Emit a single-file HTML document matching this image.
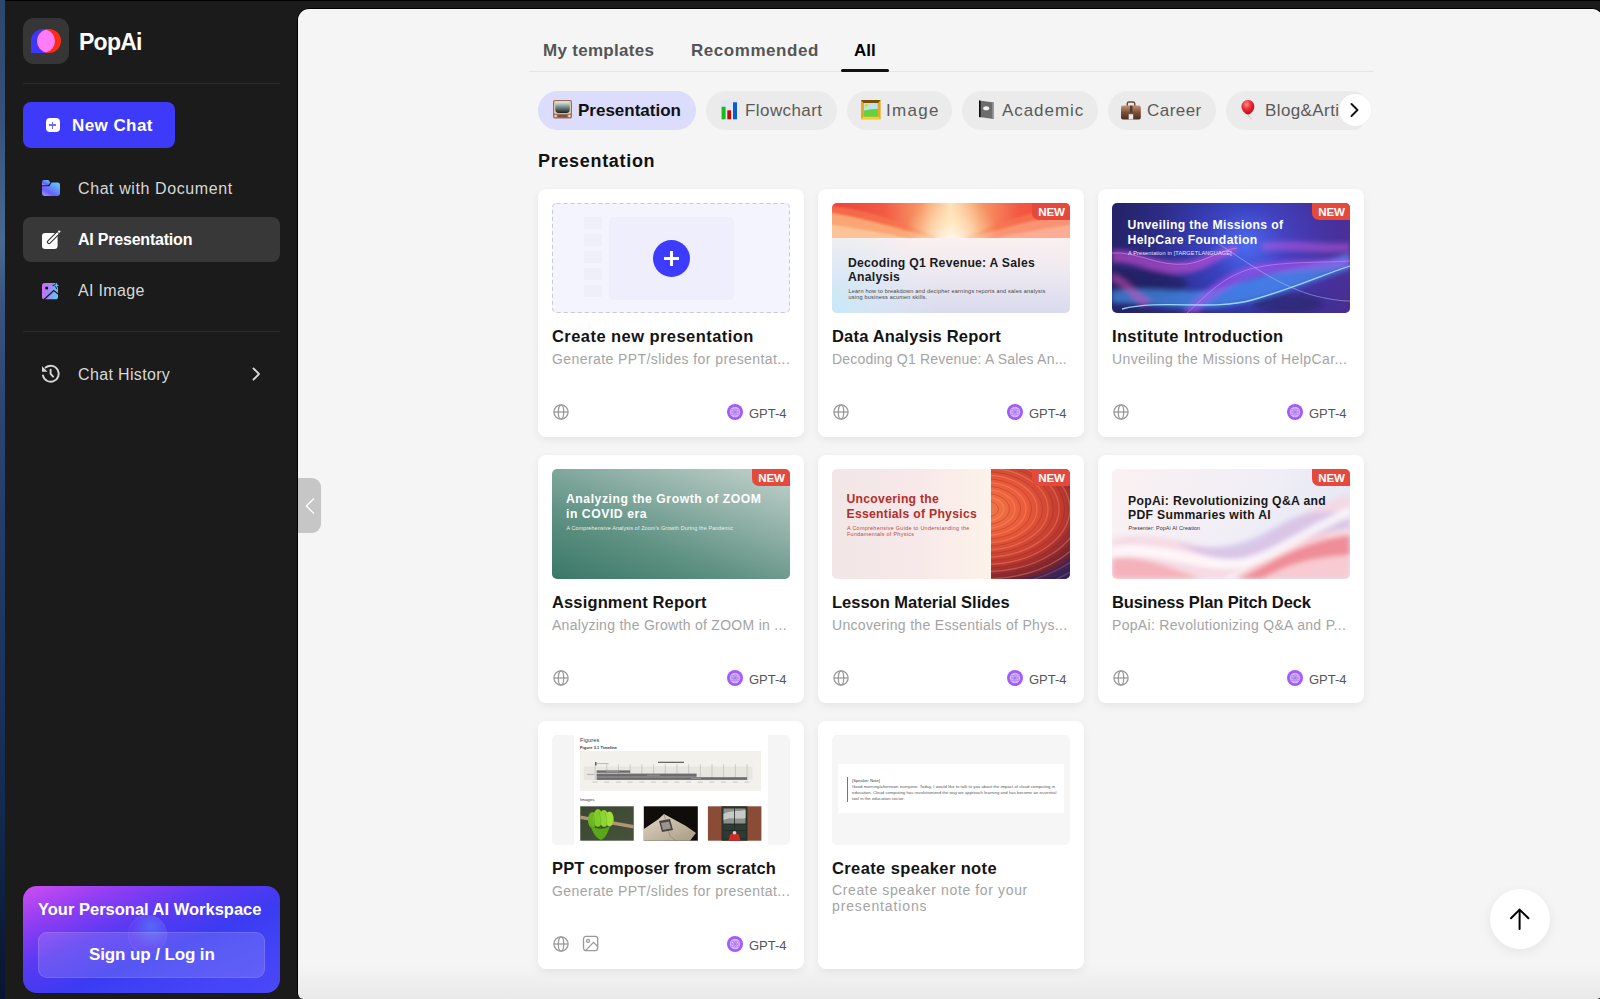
<!DOCTYPE html>
<html><head><meta charset="utf-8">
<style>
*{margin:0;padding:0;box-sizing:border-box}
html,body{width:1600px;height:999px;overflow:hidden}
body{background:#1b1b1b;font-family:"Liberation Sans",sans-serif;position:relative}
.abs{position:absolute}
.t{position:absolute;white-space:nowrap;line-height:1}
#strip{left:0;top:0;width:5px;height:999px;background:linear-gradient(#2c466c 0%,#36527a 12%,#4a6990 24%,#3a5680 30%,#2c4872 40%,#213c66 55%,#1a325c 70%,#122a4e 82%,#0c1e3c 92%,#081530 100%)}
#topline{left:5px;top:0;width:1595px;height:1px;background:#000}
#panel{left:297px;top:8px;width:1306px;height:991px;background:#f5f5f5;border:1px solid #000;border-bottom:0;border-radius:12px 10px 6px 6px;overflow:hidden}
.side-t{color:#d8d8d8;font-size:16px;letter-spacing:0.45px}
.card{position:absolute;width:266px;height:248px;background:#fff;border-radius:8px;box-shadow:0 3px 9px rgba(0,0,0,.065)}
.thumb{position:absolute;left:14px;top:14px;width:238px;height:110px;border-radius:5px;overflow:hidden}
.ctitle{position:absolute;left:14px;top:139px;font-size:16.5px;letter-spacing:0.46px;font-weight:bold;color:#141414;white-space:nowrap;line-height:1}
.csub{position:absolute;left:14px;top:163px;font-size:14px;letter-spacing:0.39px;color:#a4a4a4;white-space:nowrap;line-height:1}
.gl{position:absolute;left:13.7px;top:213.5px}
.gpt{position:absolute;left:188.3px;top:213.5px}
.gptt{position:absolute;left:211px;top:218px;font-size:13px;color:#555;line-height:1;white-space:nowrap}
.tt{position:absolute;white-space:nowrap;font-weight:bold}
.new{position:absolute;right:0;top:0;width:38px;height:17px;background:#e5493b;color:#fff;font-size:11.6px;font-weight:bold;border-bottom-left-radius:7px;text-align:center;line-height:18px;letter-spacing:-0.25px;padding-left:1px}
.chip{position:absolute;top:90.5px;height:39px;border-radius:19.5px;background:#ebebeb}
.chipt{position:absolute;top:102px;font-size:17px;color:#5a5a5a;line-height:1;white-space:nowrap}
</style></head>
<body>
<div id="topline" class="abs"></div>
<div id="strip" class="abs"></div>

<!-- sidebar -->
<div class="abs" style="left:23px;top:18px;width:46px;height:46px;border-radius:11px;background:#363636"></div>
<svg class="abs" style="left:31px;top:29px" width="30" height="24" viewBox="0 0 30 24">
  <path d="M0 24 V12 A12 12 0 0 1 24 12 A12 12 0 0 1 12 24 Z" fill="#3b37fb"/>
  <circle cx="18" cy="12" r="12" fill="#ff2b14"/>
  <path d="M15 0.38 A12 12 0 0 1 15 23.62 A12 12 0 0 1 15 0.38 Z" fill="#ff7cfb"/>
</svg>
<div class="t" style="left:79px;top:31px;font-size:23px;font-weight:bold;color:#fff;letter-spacing:-0.75px">PopAi</div>
<div class="abs" style="left:23px;top:83px;width:257px;height:1px;background:#2c2c2c"></div>

<div class="abs" style="left:23px;top:102px;width:152px;height:46px;border-radius:8px;background:#3e3afa"></div>
<div class="abs" style="left:46px;top:118px;width:14px;height:14px;border-radius:4px;background:#fff"></div>
<div class="abs" style="left:49px;top:124.3px;width:7px;height:1.4px;background:#6e6bfc"></div>
<div class="abs" style="left:51.8px;top:121.5px;width:1.4px;height:7px;background:#6e6bfc"></div>
<div class="t" style="left:72px;top:117px;font-size:17px;font-weight:bold;color:#fff;letter-spacing:0.43px">New Chat</div>

<!-- chat with document -->
<svg class="abs" style="left:42px;top:180px" width="18" height="16" viewBox="0 0 18 16">
  <defs><linearGradient id="fg" x1="1" y1="0" x2="0.2" y2="1"><stop offset="0" stop-color="#5ad8f7"/><stop offset="0.75" stop-color="#6b5dff"/><stop offset="1" stop-color="#9a8cff"/></linearGradient></defs>
  <path d="M2 0 H5.8 Q6.6 0 7.1 0.7 L8.3 2.5 L6.7 4.8 Q6.4 5.2 5.8 5.2 H0 V2 A2 2 0 0 1 2 0 Z" fill="url(#fg)"/>
  <path d="M0 6.3 H6.6 Q7.2 6.3 7.6 5.7 L9.4 2.8 Q9.7 2.4 10.2 2.4 H15.6 A2.4 2.4 0 0 1 18 4.8 V13.6 A2.4 2.4 0 0 1 15.6 16 H2.4 A2.4 2.4 0 0 1 0 13.6 Z" fill="url(#fg)"/>
</svg>
<div class="t side-t" style="left:78px;top:181px;letter-spacing:0.59px">Chat with Document</div>

<div class="abs" style="left:23px;top:217px;width:257px;height:45px;border-radius:8px;background:#383838"></div>
<svg class="abs" style="left:41px;top:230px" width="20" height="20" viewBox="0 0 20 20">
  <rect x="1" y="3" width="15.6" height="16" rx="3.2" fill="#fff"/>
  <path d="M8 12 L17.5 2.5" stroke="#383838" stroke-width="4.2" stroke-linecap="round"/>
  <path d="M8 12 L16.5 3.5" stroke="#fff" stroke-width="1.9" stroke-linecap="round"/>
  <circle cx="18.2" cy="1.6" r="1.2" fill="#fff"/>
</svg>
<div class="t" style="left:78px;top:232px;font-size:16px;font-weight:bold;color:#fff;letter-spacing:-0.21px">AI Presentation</div>

<svg class="abs" style="left:42px;top:280px" width="19" height="20" viewBox="0 0 19 20">
  <defs><linearGradient id="ig" x1="0" y1="0.3" x2="1" y2="0.6"><stop offset="0" stop-color="#cf6cf6"/><stop offset="0.5" stop-color="#9b8cf8"/><stop offset="1" stop-color="#5ccaf6"/></linearGradient></defs>
  <rect x="0" y="3" width="16" height="16.3" rx="2.6" fill="url(#ig)"/>
  <circle cx="4.7" cy="7.9" r="1.5" fill="#000"/>
  <path d="M1.8 19.8 L11.7 10.6 L16.8 14.4" stroke="#1b1b1b" stroke-width="1.3" fill="none"/>
  <path d="M14.4 0.6 L15.6 3.9 L18.9 5.2 L15.6 6.5 L14.4 9.8 L13.2 6.5 L9.9 5.2 L13.2 3.9Z" fill="#1b1b1b"/>
  <path d="M14.4 2.4 L15.2 4.4 L17.2 5.2 L15.2 6 L14.4 8 L13.6 6 L11.6 5.2 L13.6 4.4Z" fill="#5bc8f8"/>
</svg>
<div class="t side-t" style="left:78px;top:283px;letter-spacing:0.34px">AI Image</div>

<div class="abs" style="left:23px;top:331px;width:257px;height:1px;background:#2c2c2c"></div>

<svg class="abs" style="left:36px;top:358px" width="30" height="30" viewBox="0 0 30 30">
  <path d="M6.9 17.4 A8 8 0 1 0 9.6 9.6" stroke="#d8d8d8" stroke-width="1.9" fill="none" stroke-linecap="round"/>
  <path d="M6 8.2 V13.8 H11.6 Z" fill="#d8d8d8"/>
  <path d="M14.6 11.6 V15.9 L17.1 18.6" stroke="#d8d8d8" stroke-width="1.9" fill="none" stroke-linecap="round" stroke-linejoin="round"/>
</svg>
<div class="t side-t" style="left:78px;top:367px;letter-spacing:0.35px">Chat History</div>
<svg class="abs" style="left:251px;top:367px" width="10" height="14" viewBox="0 0 10 14">
  <path d="M2.5 1.5 L8 7 L2.5 12.5" stroke="#d8d8d8" stroke-width="1.8" fill="none" stroke-linecap="round" stroke-linejoin="round"/>
</svg>

<!-- workspace card -->
<div class="abs" style="left:23px;top:886px;width:257px;height:107px;border-radius:14px;overflow:hidden;background:linear-gradient(158deg,#cf4ef2 0%,#8e3df2 20%,#5a3af2 38%,#3b3bf2 58%,#4444f6 80%,#4a48f8 100%)">
  <div class="abs" style="left:105px;top:29px;width:39px;height:39px;border-radius:50%;background:radial-gradient(circle at 60% 30%,rgba(90,140,255,.55),rgba(110,60,240,.35) 60%,rgba(80,60,230,.15));box-shadow:inset 0 0 2px rgba(150,160,255,.35)"></div>
</div>
<div class="t" style="left:38px;top:901px;font-size:16.5px;font-weight:bold;color:#fff">Your Personal AI Workspace</div>
<div class="abs" style="left:38px;top:932px;width:227px;height:46px;border-radius:9px;background:rgba(255,255,255,.14);border:1px solid rgba(255,255,255,.12)"></div>
<div class="t" style="left:89px;top:946px;font-size:17px;font-weight:bold;color:#fff;letter-spacing:-0.11px">Sign up / Log in</div>

<!-- main panel -->
<div id="panel" class="abs">
<div class="abs" style="left:0;top:955px;width:1303px;height:36px;background:linear-gradient(rgba(0,0,0,0),rgba(0,0,0,.05))"></div>
</div>

<!-- tabs -->
<div class="t" style="left:543px;top:42px;font-size:17px;font-weight:bold;color:#555;letter-spacing:0.3px">My templates</div>
<div class="t" style="left:691px;top:42px;font-size:17px;font-weight:bold;color:#555;letter-spacing:0.54px">Recommended</div>
<div class="t" style="left:854px;top:42px;font-size:17px;font-weight:bold;color:#000">All</div>
<div class="abs" style="left:529px;top:71px;width:845px;height:1px;background:#e6e6e6"></div>
<div class="abs" style="left:841px;top:69px;width:48px;height:3px;border-radius:2px;background:#111"></div>

<!-- chips -->
<div class="chip" style="left:538px;width:158px;background:#dcdcfd"></div>
<div class="chipt" style="left:578px;color:#111;font-weight:bold">Presentation</div>
<div class="chip" style="left:706px;width:131px"></div>
<div class="chipt" style="left:745px;letter-spacing:0.42px">Flowchart</div>
<div class="chip" style="left:847px;width:105px"></div>
<div class="chipt" style="left:886px;letter-spacing:1.3px">Image</div>
<div class="chip" style="left:962px;width:136px"></div>
<div class="chipt" style="left:1002px;letter-spacing:0.94px">Academic</div>
<div class="chip" style="left:1108px;width:108px"></div>
<div class="chipt" style="left:1147px;letter-spacing:0.46px">Career</div>
<div class="chip" style="left:1226px;width:137px;border-radius:20px 9px 9px 20px"></div>
<div class="chipt" style="left:1265px;letter-spacing:0.4px;width:80px;overflow:hidden">Blog&amp;Arti</div>
<div class="abs" style="left:1339px;top:94px;width:32px;height:32px;border-radius:50%;background:#fff;box-shadow:0 0 2px rgba(0,0,0,.04)"></div>
<svg class="abs" style="left:1348px;top:102px" width="14" height="16" viewBox="0 0 14 16"><path d="M3.5 2 L9.5 8 L3.5 14" stroke="#111" stroke-width="1.9" fill="none" stroke-linecap="round" stroke-linejoin="round"/></svg>
<!-- emojis -->
<svg class="abs" style="left:553px;top:100px" width="19" height="19" viewBox="0 0 19 19">
  <defs><linearGradient id="tvs" x1="0" y1="0" x2="0" y2="1"><stop offset="0" stop-color="#d8efec"/><stop offset="0.45" stop-color="#7e8f8e"/><stop offset="1" stop-color="#1a1f1f"/></linearGradient></defs>
  <rect x="0" y="0" width="19" height="18.5" rx="1.8" fill="#a46a52"/>
  <rect x="1.1" y="1.1" width="16.8" height="12.6" rx="1" fill="#ddd0b0"/>
  <rect x="2.3" y="1.8" width="14.4" height="11.2" rx="3.5" fill="url(#tvs)"/>
  <rect x="5" y="15" width="9" height="2.3" fill="#6d5a4a"/>
  <circle cx="2.6" cy="16" r="1.3" fill="#e3dcc0"/><circle cx="16.4" cy="16" r="1.3" fill="#e3dcc0"/>
</svg>
<svg class="abs" style="left:721px;top:100px" width="17" height="20" viewBox="0 0 17 20">
  <rect x="0" y="0" width="16.5" height="19.5" fill="#e1e8f1"/>
  <rect x="0.6" y="6.8" width="4" height="12.5" fill="#19b81d"/>
  <rect x="6.3" y="10.3" width="3.8" height="9" fill="#c40a0a"/>
  <rect x="12" y="2.3" width="4" height="17" fill="#0a5cd0"/>
</svg>
<svg class="abs" style="left:861px;top:100px" width="20" height="20" viewBox="0 0 20 20">
  <rect x="0" y="0" width="19.6" height="19.3" fill="#e2ac1c"/>
  <path d="M0 0 H19.6 L17 3 H2.6 Z" fill="#7a4d08"/>
  <path d="M0 19.3 H19.6 L17 16.6 H2.6 Z" fill="#f4d130"/>
  <rect x="3" y="3" width="13.7" height="13.6" fill="#66d040"/>
  <path d="M3 3 H16.7 V9 Q10 8.5 3 10.5 Z" fill="#b9e3f0"/>
  <circle cx="5.5" cy="5.3" r="1.7" fill="#f0d600"/>
</svg>
<svg class="abs" style="left:978px;top:100px" width="17" height="20" viewBox="0 0 17 20">
  <path d="M1 0.5 L16 2.5 V19 L1 17 Z" fill="#6c6c6c"/>
  <path d="M1 0.5 V17 L2.6 17.3 V0.8 Z" fill="#0a0a0a"/>
  <path d="M14.3 2.5 L16 3 V19 L14.3 18.6Z" fill="#9a9a9a"/>
  <ellipse cx="8.2" cy="8.2" rx="3" ry="2" fill="#f2f2f2"/>
</svg>
<svg class="abs" style="left:1121px;top:101px" width="20" height="19" viewBox="0 0 20 19">
  <defs><linearGradient id="bc" x1="0" y1="0" x2="0" y2="1"><stop offset="0" stop-color="#c09478"/><stop offset="0.5" stop-color="#7a5138"/><stop offset="1" stop-color="#4a2e1c"/></linearGradient></defs>
  <path d="M6.3 5 V2.6 Q6.3 1 8 1 H12 Q13.7 1 13.7 2.6 V5" stroke="#6a4a38" stroke-width="1.5" fill="none"/>
  <rect x="0" y="4.6" width="19.8" height="13.8" rx="2" fill="url(#bc)"/>
  <rect x="9" y="4.6" width="2.5" height="7" fill="#5a3a28"/>
  <rect x="7.7" y="13.2" width="4.5" height="5.2" fill="#eaeaea"/>
</svg>
<svg class="abs" style="left:1240px;top:99px" width="18" height="22" viewBox="0 0 18 22">
  <defs><radialGradient id="bl" cx="0.4" cy="0.3" r="0.7"><stop offset="0" stop-color="#ff8a8a"/><stop offset="0.5" stop-color="#ee2a35"/><stop offset="1" stop-color="#b4101c"/></radialGradient></defs>
  <path d="M8 1 C12 1 14.3 4 14.3 7.5 C14.3 11.5 11 14.5 8.8 15.5 L7.2 15.5 C5 14.5 1.5 11.5 1.5 7.5 C1.5 4 4 1 8 1Z" fill="url(#bl)"/>
  <path d="M8 15.5 Q9 18.5 12 20.5" stroke="#c8b0b0" stroke-width="0.7" fill="none"/>
</svg>

<div class="t" style="left:538px;top:152px;font-size:18px;font-weight:bold;color:#111;letter-spacing:0.69px">Presentation</div>

<!-- cards -->
<div class="card" style="left:538px;top:189px">
  <div class="thumb" style="background:#f4f4fe;border-radius:4px">
    <svg class="abs" style="left:0;top:0" width="238" height="110"><rect x="0.5" y="0.5" width="237" height="109" rx="4" fill="none" stroke="#c9c9d2" stroke-width="1" stroke-dasharray="4 3"/></svg>
    <div class="abs" style="left:32px;top:14px;width:18px;height:12px;background:#efeffc"></div>
    <div class="abs" style="left:32px;top:31px;width:18px;height:12px;background:#efeffc"></div>
    <div class="abs" style="left:32px;top:48px;width:18px;height:12px;background:#efeffc"></div>
    <div class="abs" style="left:32px;top:65px;width:18px;height:12px;background:#efeffc"></div>
    <div class="abs" style="left:32px;top:82px;width:18px;height:12px;background:#efeffc"></div>
    <div class="abs" style="left:57px;top:14px;width:125px;height:83px;border-radius:5px;background:#eeeefc"></div>
    <div class="abs" style="left:101px;top:37px;width:37px;height:37px;border-radius:50%;background:#3d3bfd"></div>
    <div class="abs" style="left:112px;top:54.4px;width:15px;height:2.2px;background:#fff"></div>
    <div class="abs" style="left:118.4px;top:48px;width:2.2px;height:15px;background:#fff"></div>
  </div>
  <div class="ctitle" id="ct1" style="letter-spacing:0.442px">Create new presentation</div>
  <div class="csub" id="cs1" style="letter-spacing:0.413px;">Generate PPT/slides for presentat...</div>
  <svg class="gl" width="18" height="18" viewBox="0 0 18 18"><g stroke="#9a9a9a" stroke-width="1.3" fill="none"><circle cx="9" cy="9" r="7.1"/><ellipse cx="9" cy="9" rx="2.7" ry="7.1"/><path d="M1.9 9 H16.1"/></g></svg><svg class="gpt" width="18" height="18" viewBox="0 0 18 18"><circle cx="9" cy="9" r="8" fill="#a25bfd"/><circle cx="9" cy="9" r="5.2" fill="#dcc6ff"/><g stroke="#b98af9" stroke-width="0.9" fill="none"><ellipse cx="9" cy="9" rx="4.3" ry="1.8" transform="rotate(30 9 9)"/><ellipse cx="9" cy="9" rx="4.3" ry="1.8" transform="rotate(90 9 9)"/><ellipse cx="9" cy="9" rx="4.3" ry="1.8" transform="rotate(150 9 9)"/></g><circle cx="9" cy="9" r="1" fill="#a25bfd"/></svg><div class="gptt">GPT-4</div>
</div>
<div class="card" style="left:818px;top:189px">
  <div class="thumb"><svg class="abs" style="left:0;top:0" width="238" height="110" viewBox="0 0 238 110">
      <defs>
        <linearGradient id="d2w" x1="0" y1="0" x2="1" y2="0"><stop offset="0" stop-color="#ee4238"/><stop offset="0.22" stop-color="#f25a44"/><stop offset="0.38" stop-color="#f79a68"/><stop offset="0.5" stop-color="#fde6bc"/><stop offset="0.62" stop-color="#f79a68"/><stop offset="0.78" stop-color="#f25a44"/><stop offset="1" stop-color="#ee4238"/></linearGradient>
        <radialGradient id="d2g" cx="119" cy="38" r="48" gradientUnits="userSpaceOnUse"><stop offset="0" stop-color="#fffaf0" stop-opacity="1"/><stop offset="0.5" stop-color="#ffe6c0" stop-opacity="0.6"/><stop offset="1" stop-color="#ffd0a0" stop-opacity="0"/></radialGradient>
        <linearGradient id="d2l" x1="0" y1="0" x2="0" y2="1"><stop offset="0" stop-color="#faf0ef"/><stop offset="0.45" stop-color="#eee9f1"/><stop offset="1" stop-color="#d8daee"/></linearGradient>
        <radialGradient id="d2b" cx="0" cy="110" r="110" gradientUnits="userSpaceOnUse"><stop offset="0" stop-color="#c8e8f8" stop-opacity="1"/><stop offset="1" stop-color="#e0ecf6" stop-opacity="0"/></radialGradient>
        <filter id="d2bl" x="-20%" y="-50%" width="140%" height="200%"><feGaussianBlur stdDeviation="1.2"/></filter>
        <clipPath id="d2c"><rect x="0" y="0" width="238" height="35"/></clipPath>
      </defs>
      <rect x="0" y="35" width="238" height="75" fill="url(#d2l)"/>
      <rect x="0" y="35" width="238" height="75" fill="url(#d2b)"/>
      <g clip-path="url(#d2c)">
        <rect x="0" y="0" width="238" height="35" fill="url(#d2w)"/>
        <g filter="url(#d2bl)"><path d="M-4 3 L0 3 C30 6 70 18 105 35 V42 H-4Z" fill="#f7784e" opacity="0.7"/>
        <path d="M-4 10 L0 10 C35 16 70 26 100 35 V42 H-4Z" fill="#fbb07c" opacity="0.85"/>
        <path d="M-4 22 L0 22 C30 26 55 31 75 35 V42 H-4Z" fill="#fdd0a6" opacity="0.7"/>
        <path d="M242 3 L238 3 C208 6 168 18 133 35 V42 H242Z" fill="#f7784e" opacity="0.7"/>
        <path d="M242 10 L238 10 C203 16 168 26 138 35 V42 H242Z" fill="#fa9c7c" opacity="0.8"/>
        <path d="M242 22 L238 22 C208 26 183 31 163 35 V42 H242Z" fill="#fcb8a0" opacity="0.7"/></g>
        <ellipse cx="119" cy="38" rx="60" ry="48" fill="url(#d2g)"/>
      </g>
    </svg>
    <div class="tt" style="left:16px;top:53px;font-size:12.2px;color:#1b1b1b;letter-spacing:0.25px;line-height:14px">Decoding Q1 Revenue: A Sales<br>Analysis</div>
    <div class="tt" style="left:16.5px;top:85px;font-size:5.5px;color:#444;line-height:6px;letter-spacing:0.22px;font-weight:normal">Learn how to breakdown and decipher earnings reports and sales analysis<br>using business acumen skills.</div>
    <div class="new">NEW</div></div>
  <div class="ctitle" id="ct2" style="letter-spacing:0.182px">Data Analysis Report</div>
  <div class="csub" id="cs2" style="letter-spacing:0.202px;">Decoding Q1 Revenue: A Sales An...</div>
  <svg class="gl" width="18" height="18" viewBox="0 0 18 18"><g stroke="#9a9a9a" stroke-width="1.3" fill="none"><circle cx="9" cy="9" r="7.1"/><ellipse cx="9" cy="9" rx="2.7" ry="7.1"/><path d="M1.9 9 H16.1"/></g></svg><svg class="gpt" width="18" height="18" viewBox="0 0 18 18"><circle cx="9" cy="9" r="8" fill="#a25bfd"/><circle cx="9" cy="9" r="5.2" fill="#dcc6ff"/><g stroke="#b98af9" stroke-width="0.9" fill="none"><ellipse cx="9" cy="9" rx="4.3" ry="1.8" transform="rotate(30 9 9)"/><ellipse cx="9" cy="9" rx="4.3" ry="1.8" transform="rotate(90 9 9)"/><ellipse cx="9" cy="9" rx="4.3" ry="1.8" transform="rotate(150 9 9)"/></g><circle cx="9" cy="9" r="1" fill="#a25bfd"/></svg><div class="gptt">GPT-4</div>
</div>
<div class="card" style="left:1098px;top:189px">
  <div class="thumb"><svg class="abs" style="left:0;top:0" width="238" height="110" viewBox="0 0 238 110">
      <defs>
        <radialGradient id="u3g" cx="135" cy="42" r="130" gradientUnits="userSpaceOnUse"><stop offset="0" stop-color="#4c6cf0"/><stop offset="0.3" stop-color="#3a42c0"/><stop offset="0.7" stop-color="#2c2c88"/><stop offset="1" stop-color="#25246a"/></radialGradient>
        <linearGradient id="u3p" x1="0" y1="0" x2="1" y2="0"><stop offset="0.55" stop-color="#7a3ac0" stop-opacity="0"/><stop offset="1" stop-color="#7a3ac0" stop-opacity="0.4"/></linearGradient>
        <filter id="u3f" x="-20%" y="-50%" width="140%" height="200%"><feGaussianBlur stdDeviation="2.6"/></filter>
        <filter id="u3h" x="-10%" y="-50%" width="120%" height="200%"><feGaussianBlur stdDeviation="0.5"/></filter>
      </defs>
      <rect width="238" height="110" fill="url(#u3g)"/>
      <rect width="238" height="110" fill="url(#u3p)"/>
      <g filter="url(#u3f)">
        <ellipse cx="30" cy="82" rx="45" ry="16" fill="#22205a" opacity="0.6"/>
        <ellipse cx="175" cy="100" rx="35" ry="10" fill="#22205a" opacity="0.5"/>
        <path d="M0 47 C25 45 45 62 75 58 C95 55 105 45 125 42 L125 50 C105 55 95 68 75 70 C45 73 25 58 0 60Z" fill="#d24ed8" opacity="0.6"/>
        <path d="M150 40 C180 35 210 42 238 40 L238 48 C210 52 180 46 150 48Z" fill="#d060e8" opacity="0.45"/>
        <path d="M0 88 C40 82 80 95 120 82 C160 70 200 62 238 50 L238 66 C200 78 160 95 120 102 C80 110 40 100 0 100Z" fill="#4aa4ff" opacity="0.6"/>
        <path d="M70 110 C90 90 110 70 140 62 C170 55 210 58 238 55 L238 63 C205 67 170 67 145 73 C115 81 95 100 86 110Z" fill="#b452f2" opacity="0.55"/>
        <path d="M0 70 C15 75 25 90 40 98 L30 104 C20 95 10 82 0 78Z" fill="#e050c0" opacity="0.5"/>
      </g>
      <g filter="url(#u3h)" fill="none">
        <path d="M10 106 C50 96 100 108 140 97 C180 86 210 72 238 63" stroke="#a8ecff" stroke-width="1.3" opacity="0.85"/>
        <path d="M0 50 C25 48 45 64 75 61 C95 58 105 48 125 45" stroke="#f0a0ff" stroke-width="0.8" opacity="0.6"/>
        <path d="M105 40 C130 55 160 80 200 92 C215 96 228 98 238 98" stroke="#c8d8ff" stroke-width="0.8" opacity="0.55"/>
        <path d="M75 110 C95 92 112 72 142 65 C172 58 208 60 238 58" stroke="#e8a0ff" stroke-width="0.8" opacity="0.55"/>
      </g>
    </svg>
    <div class="tt" style="left:15.5px;top:15px;font-size:12.2px;color:#fff;letter-spacing:0.36px;line-height:14.6px">Unveiling the Missions of<br>HelpCare Foundation</div>
    <div class="tt" style="left:16px;top:46.5px;font-size:5.6px;color:#e8e0ff;font-weight:normal;letter-spacing:0.1px">A Presentation in [TARGETLANGUAGE]</div>
    <div class="new">NEW</div></div>
  <div class="ctitle" id="ct3" style="letter-spacing:0.293px">Institute Introduction</div>
  <div class="csub" id="cs3" style="letter-spacing:0.399px;">Unveiling the Missions of HelpCar...</div>
  <svg class="gl" width="18" height="18" viewBox="0 0 18 18"><g stroke="#9a9a9a" stroke-width="1.3" fill="none"><circle cx="9" cy="9" r="7.1"/><ellipse cx="9" cy="9" rx="2.7" ry="7.1"/><path d="M1.9 9 H16.1"/></g></svg><svg class="gpt" width="18" height="18" viewBox="0 0 18 18"><circle cx="9" cy="9" r="8" fill="#a25bfd"/><circle cx="9" cy="9" r="5.2" fill="#dcc6ff"/><g stroke="#b98af9" stroke-width="0.9" fill="none"><ellipse cx="9" cy="9" rx="4.3" ry="1.8" transform="rotate(30 9 9)"/><ellipse cx="9" cy="9" rx="4.3" ry="1.8" transform="rotate(90 9 9)"/><ellipse cx="9" cy="9" rx="4.3" ry="1.8" transform="rotate(150 9 9)"/></g><circle cx="9" cy="9" r="1" fill="#a25bfd"/></svg><div class="gptt">GPT-4</div>
</div>

<div class="card" style="left:538px;top:455px">
  <div class="thumb"><div class="abs" style="left:0;top:0;width:238px;height:110px;background:linear-gradient(20deg,#3a7767 0%,#5f9283 35%,#8fb0a6 65%,#c3d3ce 100%)"></div>
    <div class="tt" style="left:14px;top:23px;font-size:12.2px;color:#fff;letter-spacing:0.55px;line-height:14.6px">Analyzing the Growth of ZOOM<br>in COVID era</div>
    <div class="tt" style="left:14.5px;top:55.5px;font-size:5.4px;color:#e8f0ee;font-weight:normal;letter-spacing:0.12px">A Comprehensive Analysis of Zoom's Growth During the Pandemic</div>
    <div class="new">NEW</div></div>
  <div class="ctitle" id="ct4" style="letter-spacing:0.141px">Assignment Report</div>
  <div class="csub" id="cs4" style="letter-spacing:0.284px;">Analyzing the Growth of ZOOM in ...</div>
  <svg class="gl" width="18" height="18" viewBox="0 0 18 18"><g stroke="#9a9a9a" stroke-width="1.3" fill="none"><circle cx="9" cy="9" r="7.1"/><ellipse cx="9" cy="9" rx="2.7" ry="7.1"/><path d="M1.9 9 H16.1"/></g></svg><svg class="gpt" width="18" height="18" viewBox="0 0 18 18"><circle cx="9" cy="9" r="8" fill="#a25bfd"/><circle cx="9" cy="9" r="5.2" fill="#dcc6ff"/><g stroke="#b98af9" stroke-width="0.9" fill="none"><ellipse cx="9" cy="9" rx="4.3" ry="1.8" transform="rotate(30 9 9)"/><ellipse cx="9" cy="9" rx="4.3" ry="1.8" transform="rotate(90 9 9)"/><ellipse cx="9" cy="9" rx="4.3" ry="1.8" transform="rotate(150 9 9)"/></g><circle cx="9" cy="9" r="1" fill="#a25bfd"/></svg><div class="gptt">GPT-4</div>
</div>
<div class="card" style="left:818px;top:455px">
  <div class="thumb"><div class="abs" style="left:0;top:0;width:159px;height:110px;background:linear-gradient(90deg,#f2e6e6 0%,#f7e8e9 50%,#fdf2ea 100%)"></div>
    <svg class="abs" style="left:159px;top:0" width="79" height="110" viewBox="0 0 79 110">
      <defs>
        <radialGradient id="p5" cx="-6" cy="40" r="120" gradientUnits="userSpaceOnUse" gradientTransform="translate(-6 40) scale(1 0.7) translate(6 -40)"><stop offset="0" stop-color="#f27a48"/><stop offset="0.35" stop-color="#ea5a3a"/><stop offset="0.65" stop-color="#c03a30"/><stop offset="0.85" stop-color="#7a2430"/><stop offset="1" stop-color="#3a2050"/></radialGradient>
      </defs>
      <rect width="79" height="110" fill="url(#p5)"/>
      <g fill="none"><ellipse cx="-6" cy="40" rx="13.5" ry="8.6" stroke="#8a1e1e" stroke-width="1.0" opacity="0.3"/><ellipse cx="-6" cy="40" rx="19.0" ry="12.2" stroke="#ffa070" stroke-width="1.3" opacity="0.35"/><ellipse cx="-6" cy="40" rx="24.5" ry="15.8" stroke="#8a1e1e" stroke-width="1.0" opacity="0.3"/><ellipse cx="-6" cy="40" rx="30.0" ry="19.4" stroke="#ffa070" stroke-width="1.3" opacity="0.35"/><ellipse cx="-6" cy="40" rx="35.5" ry="23.0" stroke="#8a1e1e" stroke-width="1.0" opacity="0.3"/><ellipse cx="-6" cy="40" rx="41.0" ry="26.6" stroke="#ffa070" stroke-width="1.3" opacity="0.35"/><ellipse cx="-6" cy="40" rx="46.5" ry="30.2" stroke="#8a1e1e" stroke-width="1.0" opacity="0.3"/><ellipse cx="-6" cy="40" rx="52.0" ry="33.8" stroke="#ffa070" stroke-width="1.3" opacity="0.35"/><ellipse cx="-6" cy="40" rx="57.5" ry="37.4" stroke="#8a1e1e" stroke-width="1.0" opacity="0.3"/><ellipse cx="-6" cy="40" rx="63.0" ry="41.0" stroke="#ffa070" stroke-width="1.3" opacity="0.35"/><ellipse cx="-6" cy="40" rx="68.5" ry="44.6" stroke="#8a1e1e" stroke-width="1.0" opacity="0.3"/><ellipse cx="-6" cy="40" rx="74.0" ry="48.2" stroke="#ffa070" stroke-width="1.3" opacity="0.35"/><ellipse cx="-6" cy="40" rx="79.5" ry="51.8" stroke="#8a1e1e" stroke-width="1.0" opacity="0.3"/><ellipse cx="-6" cy="40" rx="85.0" ry="55.4" stroke="#ffa070" stroke-width="1.3" opacity="0.35"/><ellipse cx="-6" cy="40" rx="90.5" ry="59.0" stroke="#8a1e1e" stroke-width="1.0" opacity="0.3"/><ellipse cx="-6" cy="40" rx="96.0" ry="62.6" stroke="#ffa070" stroke-width="1.3" opacity="0.35"/><ellipse cx="-6" cy="40" rx="101.5" ry="66.2" stroke="#8a1e1e" stroke-width="1.0" opacity="0.3"/><ellipse cx="-6" cy="40" rx="107.0" ry="69.8" stroke="#ffa070" stroke-width="1.3" opacity="0.35"/><ellipse cx="-6" cy="40" rx="112.5" ry="73.4" stroke="#8a1e1e" stroke-width="1.0" opacity="0.3"/><ellipse cx="-6" cy="40" rx="118.0" ry="77.0" stroke="#ffa070" stroke-width="1.3" opacity="0.35"/><ellipse cx="-6" cy="40" rx="123.5" ry="80.6" stroke="#8a1e1e" stroke-width="1.0" opacity="0.3"/><ellipse cx="-6" cy="40" rx="129.0" ry="84.2" stroke="#ffa070" stroke-width="1.3" opacity="0.35"/><ellipse cx="-6" cy="40" rx="134.5" ry="87.8" stroke="#8a1e1e" stroke-width="1.0" opacity="0.3"/><ellipse cx="-6" cy="40" rx="140.0" ry="91.4" stroke="#ffa070" stroke-width="1.3" opacity="0.35"/><ellipse cx="-6" cy="40" rx="145.5" ry="95.0" stroke="#8a1e1e" stroke-width="1.0" opacity="0.3"/><ellipse cx="-6" cy="40" rx="151.0" ry="98.6" stroke="#ffa070" stroke-width="1.3" opacity="0.35"/><ellipse cx="-6" cy="40" rx="156.5" ry="102.2" stroke="#8a1e1e" stroke-width="1.0" opacity="0.3"/><ellipse cx="-6" cy="40" rx="162.0" ry="105.8" stroke="#ffa070" stroke-width="1.3" opacity="0.35"/><ellipse cx="-6" cy="40" rx="167.5" ry="109.4" stroke="#8a1e1e" stroke-width="1.0" opacity="0.3"/></g>
      <path d="M30 110 Q65 104 79 88 V110Z" fill="#2a2a70" opacity="0.35"/>
    </svg>
    <div class="tt" style="left:14.5px;top:23px;font-size:12.2px;color:#b32f2a;letter-spacing:0.28px;line-height:14.6px">Uncovering the<br>Essentials of Physics</div>
    <div class="tt" style="left:15px;top:55.5px;font-size:5.4px;color:#b84a44;font-weight:normal;letter-spacing:0.3px;line-height:6.2px">A Comprehensive Guide to Understanding the<br>Fundamentals of Physics</div>
    <div class="new">NEW</div></div>
  <div class="ctitle" id="ct5" style="letter-spacing:-0.011px">Lesson Material Slides</div>
  <div class="csub" id="cs5" style="letter-spacing:0.315px;">Uncovering the Essentials of Phys...</div>
  <svg class="gl" width="18" height="18" viewBox="0 0 18 18"><g stroke="#9a9a9a" stroke-width="1.3" fill="none"><circle cx="9" cy="9" r="7.1"/><ellipse cx="9" cy="9" rx="2.7" ry="7.1"/><path d="M1.9 9 H16.1"/></g></svg><svg class="gpt" width="18" height="18" viewBox="0 0 18 18"><circle cx="9" cy="9" r="8" fill="#a25bfd"/><circle cx="9" cy="9" r="5.2" fill="#dcc6ff"/><g stroke="#b98af9" stroke-width="0.9" fill="none"><ellipse cx="9" cy="9" rx="4.3" ry="1.8" transform="rotate(30 9 9)"/><ellipse cx="9" cy="9" rx="4.3" ry="1.8" transform="rotate(90 9 9)"/><ellipse cx="9" cy="9" rx="4.3" ry="1.8" transform="rotate(150 9 9)"/></g><circle cx="9" cy="9" r="1" fill="#a25bfd"/></svg><div class="gptt">GPT-4</div>
</div>
<div class="card" style="left:1098px;top:455px">
  <div class="thumb"><svg class="abs" style="left:0;top:0" width="238" height="110" viewBox="0 0 238 110">
      <defs>
        <linearGradient id="q6" x1="0" y1="0" x2="1" y2="0.3"><stop offset="0" stop-color="#fbf1f2"/><stop offset="0.6" stop-color="#f1eef6"/><stop offset="1" stop-color="#e6e8f4"/></linearGradient>
        <filter id="q6f"><feGaussianBlur stdDeviation="2.5"/></filter>
      </defs>
      <rect width="238" height="110" fill="url(#q6)"/>
      <g filter="url(#q6f)">
        <path d="M0 70 C40 60 70 75 110 80 C150 85 180 40 238 25 V110 H0Z" fill="#f6d6e0" opacity="0.8"/>
        <path d="M60 70 C90 85 130 78 160 60 C190 42 210 40 238 45 V60 C210 60 180 80 150 88 C120 96 90 90 60 70Z" fill="#c8b8e8" opacity="0.6"/>
        <path d="M0 90 C30 85 60 100 90 110 H0Z" fill="#f4a8b0" opacity="0.8"/>
        <path d="M120 110 C150 90 180 65 238 62 V110Z" fill="#ee7a86" opacity="0.8"/>
        <path d="M150 110 C175 95 200 88 238 86 V110Z" fill="#f8d0d8" opacity="0.9"/>
        <path d="M0 78 C40 70 80 88 115 90 C150 92 185 60 238 38 V48 C190 68 155 100 115 100 C80 100 40 82 0 88Z" fill="#ffffff" opacity="0.75"/>
        <path d="M110 110 C140 95 175 68 238 60 V66 C180 74 150 100 125 110Z" fill="#ffffff" opacity="0.6"/>
      </g>
    </svg>
    <div class="tt" style="left:16px;top:24.5px;font-size:12.2px;color:#181818;letter-spacing:0.32px;line-height:14.6px">PopAi: Revolutionizing Q&amp;A and<br>PDF Summaries with AI</div>
    <div class="tt" style="left:16.5px;top:55.5px;font-size:5.4px;color:#333;font-weight:normal;letter-spacing:0.1px">Presenter: PopAi AI Creation</div>
    <div class="new">NEW</div></div>
  <div class="ctitle" id="ct6" style="letter-spacing:-0.122px">Business Plan Pitch Deck</div>
  <div class="csub" id="cs6" style="letter-spacing:0.314px;">PopAi: Revolutionizing Q&amp;A and P...</div>
  <svg class="gl" width="18" height="18" viewBox="0 0 18 18"><g stroke="#9a9a9a" stroke-width="1.3" fill="none"><circle cx="9" cy="9" r="7.1"/><ellipse cx="9" cy="9" rx="2.7" ry="7.1"/><path d="M1.9 9 H16.1"/></g></svg><svg class="gpt" width="18" height="18" viewBox="0 0 18 18"><circle cx="9" cy="9" r="8" fill="#a25bfd"/><circle cx="9" cy="9" r="5.2" fill="#dcc6ff"/><g stroke="#b98af9" stroke-width="0.9" fill="none"><ellipse cx="9" cy="9" rx="4.3" ry="1.8" transform="rotate(30 9 9)"/><ellipse cx="9" cy="9" rx="4.3" ry="1.8" transform="rotate(90 9 9)"/><ellipse cx="9" cy="9" rx="4.3" ry="1.8" transform="rotate(150 9 9)"/></g><circle cx="9" cy="9" r="1" fill="#a25bfd"/></svg><div class="gptt">GPT-4</div>
</div>

<div class="card" style="left:538px;top:721px">
  <div class="thumb" style="background:#f5f5f5">
    <div class="abs" style="left:22px;top:0;width:194px;height:110px;background:#fff"></div>
    <div class="tt" style="left:28px;top:2px;font-size:5.6px;color:#333;font-weight:normal;letter-spacing:0.1px">Figures</div>
    <div class="tt" style="left:28px;top:9.6px;font-size:3.9px;color:#333;letter-spacing:0.1px">Figure 3.1 Timeline</div>
    <div class="abs" style="left:27.75px;top:16px;width:181px;height:40.4px;background:#f3f1ec"></div>
    <svg class="abs" style="left:27.5px;top:16px" width="182" height="41">
      <rect x="3.8" y="15.5" width="168.7" height="13.6" fill="#e8e6e1"/>
      <g stroke="#a8a6a2" stroke-width="0.45"><path d="M15.10 13 V29"/><path d="M26.79 13 V29"/><path d="M38.48 13 V29"/><path d="M50.17 13 V29"/><path d="M61.86 13 V29"/><path d="M73.55 13 V29"/><path d="M85.24 13 V29"/><path d="M96.93 13 V29"/><path d="M108.62 13 V29"/><path d="M120.31 13 V29"/><path d="M132.00 13 V29"/><path d="M143.69 13 V29"/><path d="M155.38 13 V29"/><path d="M167.07 13 V29"/></g>
      <rect x="78" y="10.7" width="26" height="1.3" fill="#666"/>
      <rect x="15.1" y="11" width="1.4" height="3.5" fill="#555"/>
      <rect x="16.6" y="12.3" width="12" height="0.8" fill="#aaa"/>
      <rect x="16.6" y="19.4" width="33.5" height="2.4" fill="#6c6c6c"/>
      <rect x="16.6" y="22.6" width="100" height="3.2" fill="#6c6c6c"/>
      <rect x="16.6" y="26.2" width="150.5" height="2.7" fill="#6c6c6c"/>
      <rect x="26" y="20.2" width="13" height="0.8" fill="#9a9a9a"/>
      <rect x="67" y="23.8" width="13" height="0.8" fill="#9a9a9a"/>
      <rect x="111" y="27.2" width="10" height="0.8" fill="#9a9a9a"/>
      <rect x="7" y="22.9" width="7.5" height="1" fill="#b0aeaa"/>
      <rect x="12.50" y="30.6" width="5" height="0.9" fill="#c4c2be"/><rect x="24.19" y="30.6" width="5" height="0.9" fill="#c4c2be"/><rect x="35.88" y="30.6" width="5" height="0.9" fill="#c4c2be"/><rect x="47.57" y="30.6" width="5" height="0.9" fill="#c4c2be"/><rect x="59.26" y="30.6" width="5" height="0.9" fill="#c4c2be"/><rect x="70.95" y="30.6" width="5" height="0.9" fill="#c4c2be"/><rect x="82.64" y="30.6" width="5" height="0.9" fill="#c4c2be"/><rect x="94.33" y="30.6" width="5" height="0.9" fill="#c4c2be"/><rect x="106.02" y="30.6" width="5" height="0.9" fill="#c4c2be"/><rect x="117.71" y="30.6" width="5" height="0.9" fill="#c4c2be"/><rect x="129.40" y="30.6" width="5" height="0.9" fill="#c4c2be"/><rect x="141.09" y="30.6" width="5" height="0.9" fill="#c4c2be"/><rect x="152.78" y="30.6" width="5" height="0.9" fill="#c4c2be"/><rect x="164.47" y="30.6" width="5" height="0.9" fill="#c4c2be"/>
    </svg>
    <div class="tt" style="left:28px;top:61.8px;font-size:4.4px;color:#333;font-weight:normal">Images</div>
    <svg class="abs" style="left:27.5px;top:71px" width="182" height="35">
      <defs>
        <linearGradient id="sn1" x1="0" y1="0" x2="1" y2="1"><stop offset="0" stop-color="#3a4632"/><stop offset="1" stop-color="#46523a"/></linearGradient>
        <radialGradient id="sn2" cx="0.45" cy="0.35" r="0.6"><stop offset="0" stop-color="#b4e84a"/><stop offset="0.6" stop-color="#7cc428"/><stop offset="1" stop-color="#3e8a18"/></radialGradient>
        <linearGradient id="bk" x1="0" y1="0" x2="1" y2="1"><stop offset="0" stop-color="#e2d8c6"/><stop offset="1" stop-color="#a89a82"/></linearGradient>
      </defs>
      <rect x="0.25" y="0.3" width="53.5" height="34.4" fill="url(#sn1)"/>
      <path d="M0.25 9.5 L53.7 19 V22.5 L0.25 13 Z" fill="#b09474"/>
      <ellipse cx="12.5" cy="14" rx="4.5" ry="8" fill="#6cb81e"/>
      <ellipse cx="18" cy="12" rx="4.8" ry="9" fill="#82cc2a"/>
      <ellipse cx="24" cy="12.5" rx="4.8" ry="8.5" fill="#8ed432"/>
      <ellipse cx="29.5" cy="13" rx="4.2" ry="7.5" fill="#9ede3a"/>
      <path d="M10 18 C12 26 16 32 21 34 C26 32 28 26 30 20 C24 24 16 24 10 18Z" fill="#5aa818"/>
      <path d="M13 8 C15 12 15 18 14 22 M19 6 C21 11 21 18 20 24 M25 7 C27 12 27 18 26 22" stroke="#4a9a14" stroke-width="0.6" fill="none" opacity="0.6"/>
      <rect x="63.8" y="0.3" width="54" height="34.4" fill="#100c0a"/>
      <path d="M63.8 23 L78 13.5 L84 8 L106 20 L116 27 L110 34.7 L63.8 34.7Z" fill="url(#bk)"/>
      <path d="M84 8 L90 30 L96 34.7" stroke="#8a7c68" stroke-width="0.6" fill="none"/>
      <path d="M79 15 L90 13 L93 24 L82 26Z" fill="#4a4440"/>
      <path d="M81 17 L89 15.5 L91 22.5 L83 24Z" fill="#9a948c"/>
      <rect x="127.9" y="0.3" width="53.5" height="34.4" fill="#8a4c36"/>
      <rect x="141.5" y="0.3" width="26" height="34.4" fill="#26342c"/>
      <rect x="143.5" y="2.5" width="22" height="15" fill="#8e908e"/>
      <path d="M143.5 8 C150 4 158 6 165.5 4 V12 C158 14 150 10 143.5 14Z" fill="#c8cac8"/>
      <rect x="143.5" y="19" width="22" height="13" fill="#2e3a34"/>
      <path d="M143.5 24.5 H165.5 M154.5 2.5 V32" stroke="#1e2a24" stroke-width="0.8"/>
      <path d="M148.5 34.7 L150 29 C151 26.5 158 26.5 159 29 L160.5 34.7Z" fill="#d02a28"/>
      <circle cx="154.5" cy="26.8" r="1.8" fill="#e8d0c0"/>
    </svg>
  </div>
  <div class="ctitle" id="ct7" style="letter-spacing:0.160px">PPT composer from scratch</div>
  <div class="csub" id="cs7" style="letter-spacing:0.413px;">Generate PPT/slides for presentat...</div>
  <svg class="gl" width="18" height="18" viewBox="0 0 18 18"><g stroke="#9a9a9a" stroke-width="1.3" fill="none"><circle cx="9" cy="9" r="7.1"/><ellipse cx="9" cy="9" rx="2.7" ry="7.1"/><path d="M1.9 9 H16.1"/></g></svg><svg class="gpt" width="18" height="18" viewBox="0 0 18 18"><circle cx="9" cy="9" r="8" fill="#a25bfd"/><circle cx="9" cy="9" r="5.2" fill="#dcc6ff"/><g stroke="#b98af9" stroke-width="0.9" fill="none"><ellipse cx="9" cy="9" rx="4.3" ry="1.8" transform="rotate(30 9 9)"/><ellipse cx="9" cy="9" rx="4.3" ry="1.8" transform="rotate(90 9 9)"/><ellipse cx="9" cy="9" rx="4.3" ry="1.8" transform="rotate(150 9 9)"/></g><circle cx="9" cy="9" r="1" fill="#a25bfd"/></svg><svg class="abs" style="left:44px;top:214px" width="17" height="17" viewBox="0 0 17 17"><g stroke="#9a9a9a" stroke-width="1.3" fill="none"><rect x="1.5" y="1.4" width="14.2" height="14.3" rx="2.6"/><circle cx="6" cy="5.9" r="1.5"/><path d="M3.5 15.6 L11.5 7.4 L15.7 11.5"/></g></svg><div class="gptt">GPT-4</div>
</div>
<div class="card" style="left:818px;top:721px">
  <div class="thumb" style="background:#f6f6f6">
    <div class="abs" style="left:5.5px;top:28.5px;width:226.5px;height:49px;background:#fff"></div>
    <div class="abs" style="left:15.2px;top:41.5px;width:0.9px;height:25.5px;background:#777"></div>
    <div class="tt" style="left:20px;top:42.5px;font-size:4.2px;color:#444;font-weight:normal">[Speaker Note]</div>
    <div class="tt" style="left:20px;top:49px;font-size:4.2px;color:#555;font-weight:normal;line-height:6px;letter-spacing:0.05px">Good morning/afternoon everyone. Today, I would like to talk to you about the impact of cloud computing in<br>education. Cloud computing has revolutionized the way we approach learning and has become an essential<br>tool in the education sector.</div>
  </div>
  <div class="ctitle" id="ct8" style="letter-spacing:0.383px">Create speaker note</div>
  <div class="csub" id="cs8" style="letter-spacing:0.63px;line-height:16px;top:161px">Create speaker note for your<br><span style="letter-spacing:0.88px">presentations</span></div>
</div>

<!-- scroll top -->
<div class="abs" style="left:1490px;top:888.5px;width:60px;height:60px;border-radius:50%;background:#fff;box-shadow:0 3px 12px rgba(0,0,0,.07)"></div>
<svg class="abs" style="left:1505px;top:904px" width="30" height="30" viewBox="0 0 30 30"><path d="M14.6 5.5 V25 M6 14.2 L14.6 5.6 L23.4 14.2" stroke="#000" stroke-width="2" fill="none" stroke-linecap="round" stroke-linejoin="round"/></svg>

<!-- collapse tab -->
<div class="abs" style="left:298px;top:478px;width:23px;height:55px;border-radius:0 9px 9px 0;background:#c6c6c6"></div>
<svg class="abs" style="left:303px;top:496px" width="14" height="20" viewBox="0 0 14 20"><path d="M10.5 3 L3.3 10 L10.5 17" stroke="#fff" stroke-width="1.3" fill="none" stroke-linecap="round" stroke-linejoin="round"/></svg>


</body></html>
